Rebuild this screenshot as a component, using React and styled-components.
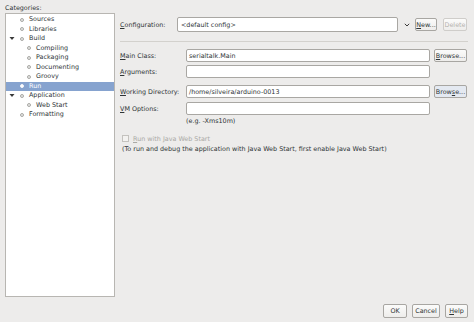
import React from 'react';
import styled, { createGlobalStyle } from 'styled-components';

const Global = createGlobalStyle`
  html, body { margin: 0; padding: 0; background: #edeceb; }
  body {
    font-family: "DejaVu Sans", "Liberation Sans", sans-serif;
    font-size: 6.4px;
    color: #2e3436;
    -webkit-font-smoothing: antialiased;
  }
`;

const Dialog = styled.div`
  width: 474px;
  height: 322px;
  display: flex;
  flex-direction: column;
  box-sizing: border-box;
  padding: 3px 6px 4px 5px;
`;

const Body = styled.div`
  flex: 1;
  display: grid;
  grid-template-columns: 110px 1fr;
  column-gap: 5px;
`;

const LeftCol = styled.div`
  display: flex;
  flex-direction: column;
`;

const Caption = styled.div`
  height: 10px;
  line-height: 10px;
`;

const TreeBox = styled.div`
  flex: 1;
  margin-bottom: 7px;
  background: #fff;
  border: 1px solid #b8b6b2;
  padding-top: 1px;
`;

const Row = styled.div`
  height: 9.5px;
  line-height: 9.5px;
  display: flex;
  align-items: center;
  padding-left: ${p => 2 + p.level * 7}px;
  background: ${p => (p.selected ? '#86a3cf' : 'transparent')};
  color: ${p => (p.selected ? '#fff' : '#2e3436')};
`;

const Expander = styled.span`
  width: 8px;
  height: 8px;
  display: flex;
  align-items: center;
  justify-content: center;
`;

const Bullet = styled.span`
  width: 2px;
  height: 2px;
  border-radius: 50%;
  border: 1px solid ${p => (p.selected ? '#f4f6fa' : '#a9a9a5')};
  background: ${p => (p.selected ? '#fff' : '#e8e8e6')};
  margin: 0 5px 0 4px;
  box-sizing: content-box;
`;

const RightCol = styled.div`
  display: flex;
  flex-direction: column;
  padding-top: 14px;
`;

const ConfigRow = styled.div`
  display: flex;
  align-items: center;
  height: 15px;
`;

const Label = styled.span`
  width: ${p => p.w || 'auto'};
  flex-shrink: 0;
  & u { text-decoration: underline; text-underline-offset: 1px; }
`;

const Combo = styled.div`
  width: 221px;
  height: 15px;
  box-sizing: border-box;
  border: 1px solid #a9a7a3;
  border-radius: 2px;
  background: #fff;
  display: flex;
  align-items: center;
  padding-left: 3px;
  margin-left: 1px;
`;

const Arrow = styled.span`
  width: 17px;
  display: flex;
  justify-content: center;
`;

const Button = styled.div`
  height: ${p => p.h || 13}px;
  width: ${p => p.w}px;
  box-sizing: border-box;
  border: 1px solid ${p => (p.disabled ? '#cfcdca' : '#a8a6a2')};
  border-radius: 2px;
  background: ${p => (p.hover ? '#e4e9f1' : 'linear-gradient(#fbfbfa, #eeedeb)')};
  color: ${p => (p.disabled ? '#b5b3af' : '#2e3436')};
  display: flex;
  align-items: center;
  justify-content: center;
  margin-left: ${p => p.ml || 0}px;
  & u { text-decoration: underline; text-underline-offset: 1px; }
`;

const Separator = styled.div`
  height: 1px;
  background: #d3d1cd;
  margin: 9px 0 7px 0;
`;

const FormRow = styled.div`
  display: flex;
  align-items: center;
  height: 13px;
  margin-top: ${p => p.mt || 0}px;
`;

const Field = styled.div`
  width: 244px;
  height: 13px;
  box-sizing: border-box;
  border: 1px solid #a9a7a3;
  border-radius: 2px;
  background: #fff;
  padding-left: 2px;
  display: flex;
  align-items: center;
  flex-shrink: 0;
`;

const Hint = styled.div`
  margin: 2px 0 0 66px;
  height: 8px;
  line-height: 8px;
`;

const CheckRow = styled.div`
  display: flex;
  align-items: center;
  margin-top: 9px;
  height: 9px;
  color: #aaa9a5;
  padding-left: 2px;
`;

const Check = styled.span`
  width: 5px;
  height: 5px;
  border: 1px solid #c4c2be;
  background: #f3f2f0;
  margin-right: 4px;
`;

const Info = styled.div`
  padding-left: 2px;
  height: 9px;
  line-height: 9px;
  margin-top: 2px;
`;

const Footer = styled.div`
  display: flex;
  justify-content: flex-end;
  height: 14px;
  gap: 5px;
`;

const tree = [
  { label: 'Sources', level: 1 },
  { label: 'Libraries', level: 1 },
  { label: 'Build', level: 1, open: true },
  { label: 'Compiling', level: 2 },
  { label: 'Packaging', level: 2 },
  { label: 'Documenting', level: 2 },
  { label: 'Groovy', level: 2 },
  { label: 'Run', level: 1, selected: true },
  { label: 'Application', level: 1, open: true },
  { label: 'Web Start', level: 2 },
  { label: 'Formatting', level: 1 },
];

const TreeRow = ({ item }) => (
  <Row level={item.level - 1} selected={item.selected}>
    <Expander>
      {item.open && (
        <svg width="6" height="5" viewBox="0 0 6 5">
          <path d="M0.5 1 L5.5 1 L3 4 Z" fill="#3a3a3a" />
        </svg>
      )}
    </Expander>
    <Bullet selected={item.selected} />
    <span>{item.label}</span>
  </Row>
);

export default function App() {
  return (
    <>
      <Global />
      <Dialog>
        <Body>
          <LeftCol>
            <Caption>Categories:</Caption>
            <TreeBox>
              {tree.map(item => <TreeRow key={item.label} item={item} />)}
            </TreeBox>
          </LeftCol>
          <RightCol>
            <ConfigRow>
              <Label w="56px"><u>C</u>onfiguration:</Label>
              <Combo>&lt;default config&gt;</Combo>
              <Arrow>
                <svg width="6" height="4" viewBox="0 0 6 4">
                  <path d="M0.8 0.8 L3 3 L5.2 0.8" stroke="#3a3a3a" strokeWidth="1" fill="none" />
                </svg>
              </Arrow>
              <Button w={22}><u>N</u>ew...</Button>
              <Button w={24} ml={6} disabled>Delete</Button>
            </ConfigRow>
            <Separator />
            <FormRow>
              <Label w="66px"><u>M</u>ain Class:</Label>
              <Field>serialtalk.Main</Field>
              <Button w={33} ml={4}><u>B</u>rowse...</Button>
            </FormRow>
            <FormRow mt={3}>
              <Label w="66px"><u>A</u>rguments:</Label>
              <Field />
            </FormRow>
            <FormRow mt={7}>
              <Label w="66px"><u>W</u>orking Directory:</Label>
              <Field>/home/silveira/arduino-0013</Field>
              <Button w={33} ml={4} hover>Brow<u>s</u>e...</Button>
            </FormRow>
            <FormRow mt={4}>
              <Label w="66px"><u>V</u>M Options:</Label>
              <Field />
            </FormRow>
            <Hint>(e.g. -Xms10m)</Hint>
            <CheckRow>
              <Check />
              <span><u>R</u>un with Java Web Start</span>
            </CheckRow>
            <Info>(To run and debug the application with Java Web Start, first enable Java Web Start)</Info>
          </RightCol>
        </Body>
        <Footer>
          <Button w={24} h={14}>OK</Button>
          <Button w={28} h={14}>Cancel</Button>
          <Button w={23} h={14}><u>H</u>elp</Button>
        </Footer>
      </Dialog>
    </>
  );
}
